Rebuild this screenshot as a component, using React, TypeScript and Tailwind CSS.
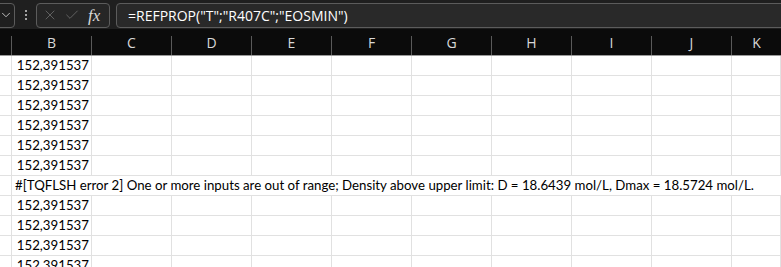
import { ChevronDown, X, Check } from "lucide-react";

const cols = ["B", "C", "D", "E", "F", "G", "H", "I", "J", "K"];

const rows: (string | null)[] = [
  "152,391537",
  "152,391537",
  "152,391537",
  "152,391537",
  "152,391537",
  "152,391537",
  null,
  "152,391537",
  "152,391537",
  "152,391537",
  "152,391537",
];

const errorText =
  "#[TQFLSH error 2] One or more inputs are out of range; Density above upper limit: D = 18.6439 mol/L, Dmax = 18.5724 mol/L.";

function Row({ value }: { value: string | null }) {
  return (
    <div className="relative flex h-[20px] shrink-0 border-b border-[#e1e1e1]">
      <div className="w-[12px] shrink-0 border-r border-[#e1e1e1]" />
      {cols.map((c, i) => (
        <div
          key={c}
          className={`${i === cols.length - 1 ? "flex-1" : "w-[80px] shrink-0"} ${
            value === null ? "" : "border-r border-[#e1e1e1]"
          } flex items-center justify-end pr-[2px] pt-[1px]`}
        >
          {i === 0 && value !== null && <span>{value}</span>}
        </div>
      ))}
      {value === null && (
        <span className="absolute left-[15px] top-0 flex h-full items-center whitespace-nowrap pt-[1px]">
          {errorText}
        </span>
      )}
    </div>
  );
}

export default function App() {
  return (
    <div className="h-[267px] w-[781px] overflow-hidden bg-white">
      {/* formula bar */}
      <div className="flex h-[29px] items-center bg-[#1f1f1f] pt-[1px]">
        <div className="ml-[-10px] flex h-[25px] w-[25px] items-center justify-end rounded-[4px] border border-[#5c5c5c] pr-[1px]">
          <ChevronDown size={14} color="#d0d0d0" strokeWidth={1.5} />
        </div>
        <div className="flex w-[21px] flex-col items-center gap-[2px]">
          <span className="h-[2px] w-[2px] rounded-full bg-[#d0d0d0]" />
          <span className="h-[2px] w-[2px] rounded-full bg-[#d0d0d0]" />
          <span className="h-[2px] w-[2px] rounded-full bg-[#d0d0d0]" />
        </div>
        <div className="flex h-[25px] w-[74px] items-center gap-[6px] rounded-[4px] border border-[#5c5c5c] bg-[#262626] pl-[5px]">
          <X size={16} color="#707070" strokeWidth={1.2} />
          <Check size={16} color="#707070" strokeWidth={1.2} />
          <span
            className="ml-[2px] text-[17px] italic leading-none text-[#d8d8d8]"
            style={{ fontFamily: '"Liberation Serif", serif' }}
          >
            fx
          </span>
        </div>
        <div
          className="ml-[6px] mr-[-10px] flex h-[25px] flex-1 items-center rounded-[4px] border border-[#5c5c5c] bg-[#292929] pl-[11px] text-[14px] text-white"
          style={{ fontFamily: '"Open Sans", sans-serif' }}
        >
          =REFPROP("T";"R407C";"EOSMIN")
        </div>
      </div>

      {/* column headers */}
      <div
        className="flex h-[27px] border-b border-[#9a9a9a] bg-[#0b0b0b] text-[14px] text-[#d8d8d8]"
        style={{ fontFamily: '"Open Sans", sans-serif' }}
      >
        <div className="mt-[7px] w-[12px] shrink-0 border-r border-[#5a5a5a]" />
        {cols.map((c, i) => (
          <div
            key={c}
            className={`${
              i === cols.length - 1 ? "flex-1" : "mt-[7px] w-[80px] shrink-0 border-r border-[#5a5a5a]"
            } flex items-center justify-center`}
          >
            <span className={i === cols.length - 1 ? "" : "-mt-[7px]"}>{c}</span>
          </div>
        ))}
      </div>

      {/* cells */}
      <div
        className="flex flex-col text-[13.25px] text-black"
        style={{ fontFamily: 'Lato, "Liberation Sans", sans-serif' }}
      >
        {rows.map((r, i) => (
          <Row key={i} value={r} />
        ))}
      </div>
    </div>
  );
}
